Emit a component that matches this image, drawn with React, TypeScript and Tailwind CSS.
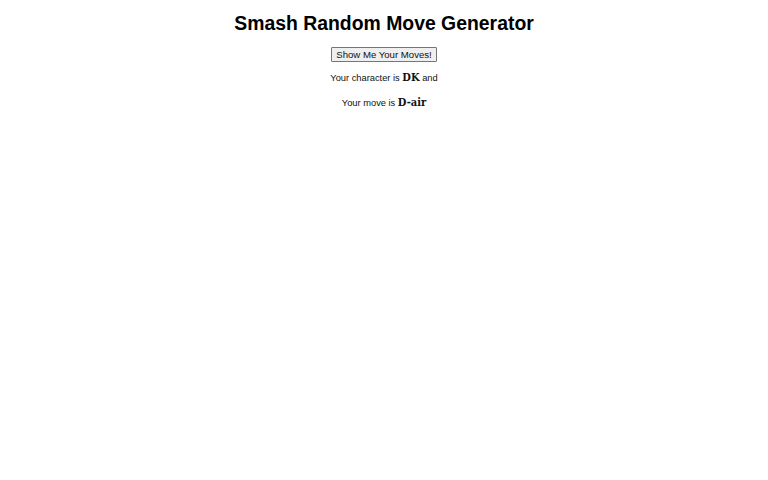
export default function App() {
  const serif = { fontFamily: '"DejaVu Serif Condensed", "DejaVu Serif", serif' };
  return (
    <div className="min-h-screen bg-white text-black" style={{ fontFamily: '"Liberation Sans", Arial, sans-serif' }}>
      <div className="flex flex-col items-center">
        <h1 className="mt-[11px] text-[19.4px] font-bold leading-[24px]">Smash Random Move Generator</h1>
        <button className="mt-[12px] h-[15px] rounded-[1px] border border-[#767676] bg-[#efefef] px-[4px] text-[9.6px] leading-[13px] text-[#111]">
          Show Me Your Moves!
        </button>
        <p className="mt-[9px] text-[9.3px] leading-[13px] text-[#111]">
          Your character is{" "}
          <b className="text-[11px] font-bold" style={serif}>DK</b> and
        </p>
        <p className="mt-[11px] text-[9.3px] leading-[13px] text-[#111]">
          Your move is{" "}
          <b className="text-[11px] font-bold" style={serif}>D-air</b>
        </p>
      </div>
    </div>
  );
}
